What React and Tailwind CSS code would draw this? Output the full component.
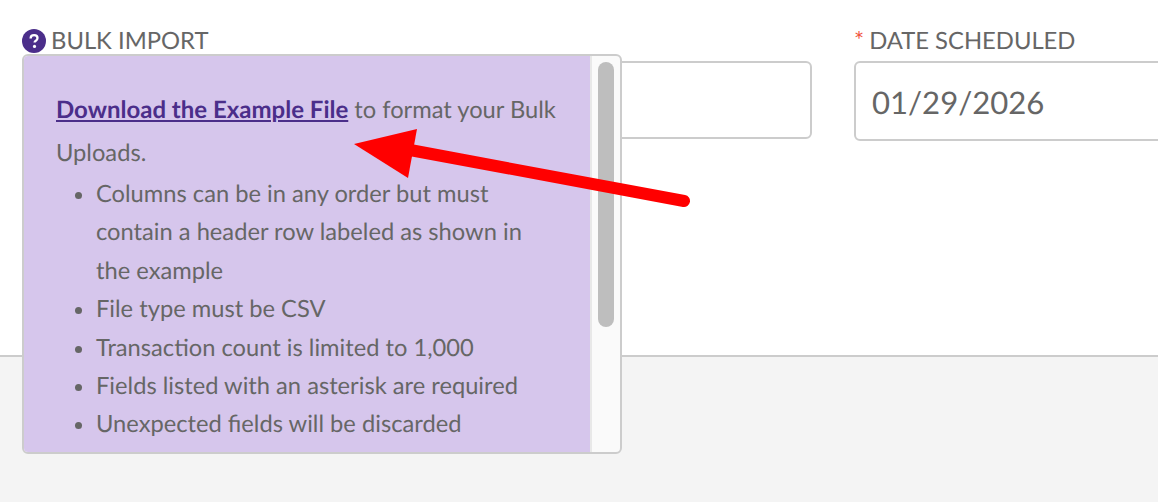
import React from 'react';

const tips = [
  'Columns can be in any order but must contain a header row labeled as shown in the example',
  'File type must be CSV',
  'Transaction count is limited to 1,000',
  'Fields listed with an asterisk are required',
  'Unexpected fields will be discarded',
];

const HelpIcon = () => (
  <svg width="24" height="24" viewBox="0 0 24 24" className="shrink-0">
    <circle cx="12" cy="12" r="12" fill="#4b2e8a" />
    <path d="M8.6 9.4c0-2 1.5-3.2 3.5-3.2s3.4 1.2 3.4 2.9c0 1.4-.8 2.1-1.7 2.7-.8.5-1.2.9-1.2 1.7" fill="none" stroke="#fff" strokeWidth="2.3" />
    <circle cx="12.5" cy="17.4" r="1.6" fill="#fff" />
  </svg>
);

const App = () => {
  return (
    <div className="relative h-[502px] w-[1158px] overflow-hidden bg-[#f4f4f4] font-['Lato',sans-serif] text-[#666666] [text-rendering:geometricPrecision]">
      <div className="flex h-[357px] gap-[42px] overflow-hidden border-b-2 border-[#cccccc] bg-white pl-[22px] pt-[27px]">
        <div className="w-[790px] shrink-0">
          <div className="flex h-[28px] items-center gap-[5px] text-[23.8px] leading-[28px]">
            <HelpIcon />
            <span>BULK IMPORT</span>
          </div>
          <div className="mt-[6px] h-[78px] rounded-md border-2 border-[#cccccc] bg-white" />
        </div>
        <div className="w-[400px] shrink-0">
          <div className="flex h-[28px] items-center text-[23.8px] leading-[28px]">
            <span className="mr-[5px] text-[#f0543c]">*</span>
            <span>DATE SCHEDULED</span>
          </div>
          <div className="mt-[6px] flex h-[80px] items-center rounded-md border-2 border-[#cccccc] bg-white pl-[16px] pt-[2px] text-[31.1px]">
            01/29/2026
          </div>
        </div>
      </div>

      {/* help popover over the form */}
      <div className="absolute left-[22px] top-[54px] flex h-[400px] w-[600px] overflow-hidden rounded-md border-2 border-[#cccccc] bg-[#fafafa]">
        <div className="w-[566px] shrink-0 bg-[#d6c6ec] pl-[32px] pr-[34px] pt-[32px] text-[23.7px] leading-[43px]">
          <p>
            <a href="#" className="text-[24px] font-bold text-[#4b2e8a] underline">Download the Example File</a> to format your Bulk Uploads.
          </p>
          <ul className="list-disc pl-[40px] leading-[38.4px]">
            {tips.map((tip) => (
              <li key={tip}>{tip}</li>
            ))}
          </ul>
        </div>
        <div className="flex-1 border-l-2 border-[#e8e8e8] pl-[6px] pt-[6px]">
          <div className="h-[265px] w-[16px] rounded-full bg-[#bebebe]" />
        </div>
      </div>

      {/* red annotation arrow */}
      <svg width="1158" height="502" className="absolute left-0 top-0">
        <line x1="684" y1="201" x2="410" y2="150" stroke="#ff0000" strokeWidth="12" strokeLinecap="round" />
        <polygon points="354,144 417,129 408,178" fill="#ff0000" />
      </svg>
    </div>
  );
};

export default App;
